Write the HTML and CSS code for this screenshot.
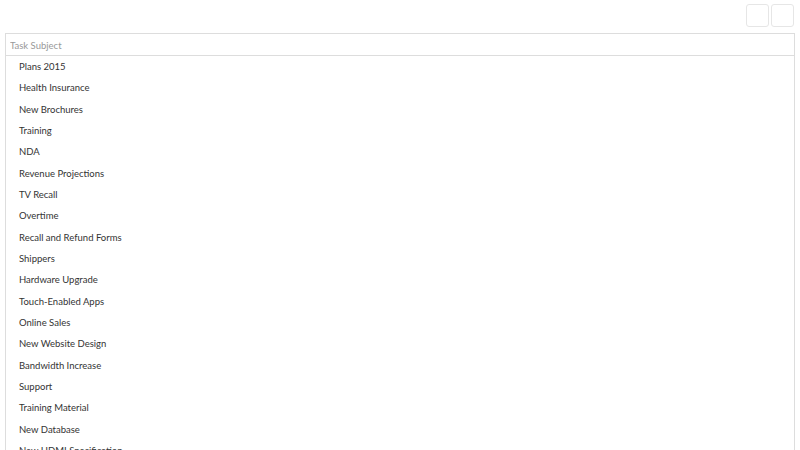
FILE: index.html
```html
<!DOCTYPE html>
<html lang="en">
<head>
    <meta charset="UTF-8">
    <title>Task Subjects</title>
    <link rel="stylesheet" href="styles.css">
</head>
<body>
<div class="page">
    <div class="toolbar">
        <button class="tool-btn" type="button"></button>
        <button class="tool-btn" type="button"></button>
    </div>
    <div class="lookup">
        <input class="lookup-input" type="text" placeholder="Task Subject">
        <ul class="lookup-list">
            <li>Plans 2015</li>
            <li>Health Insurance</li>
            <li>New Brochures</li>
            <li>Training</li>
            <li>NDA</li>
            <li>Revenue Projections</li>
            <li>TV Recall</li>
            <li>Overtime</li>
            <li>Recall and Refund Forms</li>
            <li>Shippers</li>
            <li>Hardware Upgrade</li>
            <li>Touch-Enabled Apps</li>
            <li>Online Sales</li>
            <li>New Website Design</li>
            <li>Bandwidth Increase</li>
            <li>Support</li>
            <li>Training Material</li>
            <li>New Database</li>
            <li>New HDMI Specification</li>
        </ul>
    </div>
</div>
</body>
</html>
```

FILE: styles.css
```css
body {
    margin: 0;
    font-family: 'Lato', sans-serif;
    background: #fff;
    color: #333;
    overflow: hidden;
}

.page {
    padding: 4px 5px 0;
}

.toolbar {
    display: flex;
    justify-content: flex-end;
    gap: 2px;
    padding-right: 1px;
    margin-bottom: 6px;
}

.tool-btn {
    width: 23px;
    height: 23px;
    padding: 0;
    background: #fff;
    border: 1px solid #e6e6e6;
    border-radius: 3px;
}

.lookup {
    border: 1px solid #ddd;
    border-bottom: none;
}

.lookup-input {
    display: block;
    box-sizing: border-box;
    width: 100%;
    height: 22px;
    padding: 1px 4px 0;
    font-family: inherit;
    font-size: 9.5px;
    color: #333;
    border: none;
    border-bottom: 1px solid #ddd;
    outline: none;
}

.lookup-input::placeholder {
    color: #999;
}

.lookup-list {
    list-style: none;
    margin: 0;
    padding: 0;
}

.lookup-list li {
    height: 21.333px;
    line-height: 22px;
    padding-left: 13px;
    font-size: 9.5px;
}
```
